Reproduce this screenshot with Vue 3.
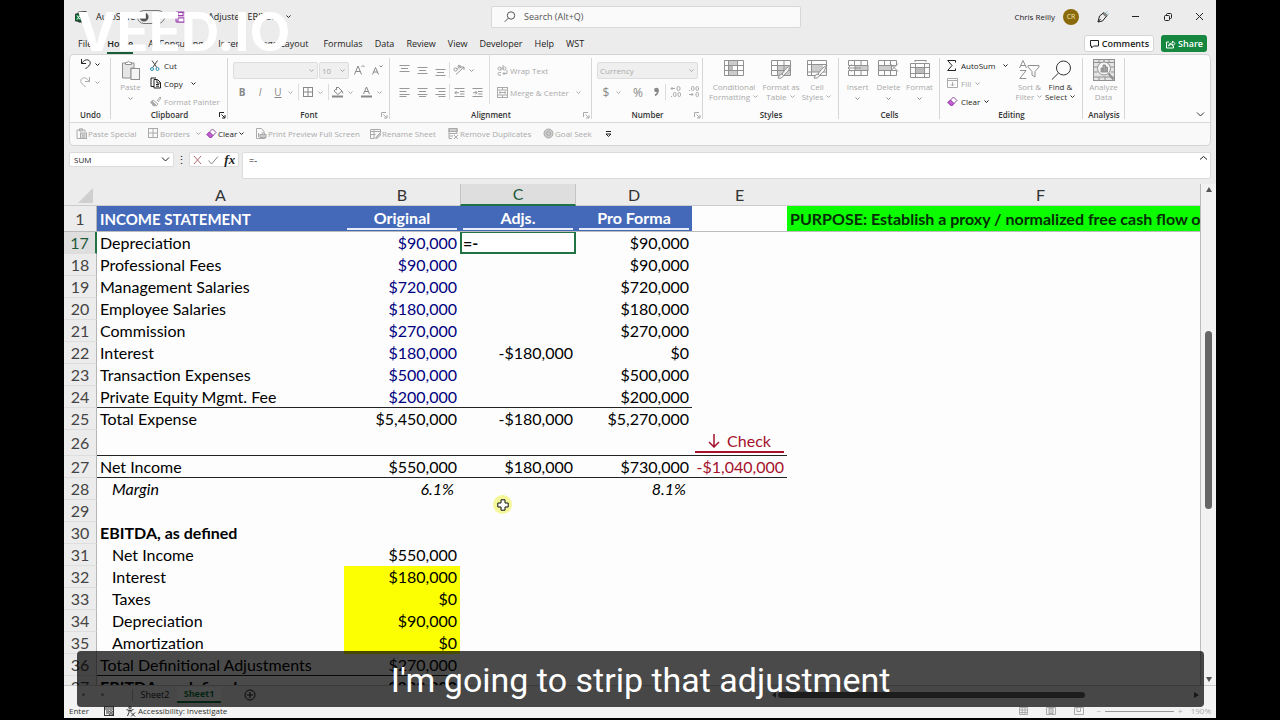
<script setup>
import { h } from 'vue'

const icons = {
  excel: '<rect x="3" y="1" width="9" height="10" rx="1" fill="#21a366"/><path d="M7 1h4a1 1 0 0 1 1 1v4H7z" fill="#33c481"/><rect x="0" y="3" width="7" height="7" rx="1" fill="#107c41"/><path d="M2 4.5l3 4M5 4.5l-3 4" stroke="#fff"/>',
  save: '<path d="M1 1h8l2 2v8H1z" fill="#dcb8e4" stroke="#9b3fb0"/><rect x="3" y="1.5" width="5" height="3" fill="#fff" stroke="#9b3fb0"/><rect x="3" y="7" width="6" height="4" fill="#fff" stroke="#9b3fb0"/>',
  search: '<circle cx="7" cy="4.5" r="3.7" fill="none"/><path d="M4.3 7.2L.7 10.8"/>',
  pen: '<path d="M1 11l1.500-6L7 1.500l3 3L5.500 10zM1 11l2.500-3M6 2.500l3 3"/><path d="M9 1.500l1-1M10.500 3h1" stroke="#2a9bb0"/>',
  minus: '<path d="M2 5.500h7"/>',
  restore: '<rect x="2.500" y="4.500" width="5" height="5" rx="1"/><path d="M4.500 4V3.500q0-1 1-1h3q1 0 1 1v3q0 1-1 1H8"/>',
  close: '<path d="M2 2l7 7M9 2L2 9"/>',
  comment: '<path d="M1.500 1.500h8v5.500h-5l-2 2v-2h-1z"/>',
  share: '<path d="M4 3H1.500v6h7V7M3.500 7q0-3 4-3.200V2L10 4.600 7.500 7V5.300Q5 5.300 3.500 7z"/>',
  caret: '<path d="M1.500 1.500L3.500 3.500 5.500 1.500"/>',
  chev: '<path d="M1 1.500L4.500 5 8 1.500"/>',
  chevup: '<path d="M1 4.500L4.500 1.500 8 4.500"/>',
  undo: '<path d="M1.500 1v4.500H6M1.500 5.500C4 2 7 1 9 2.500s1.500 4.500-1 6l-2.500 2.500"/>',
  redo: '<path d="M9.500 1v4.500H5M9.500 5.500C7 2 4 1 2 2.500S.5 7 3 8.500L5.500 11"/>',
  paste: '<path d="M1.500 3H13v5h-3v10H1.500z" fill="#e6e6e6"/><path d="M4.500 4.500v-2h1.500q1.500-2.500 3 0h1.500v2z" fill="#fff"/><rect x="10" y="8.500" width="8.500" height="11" fill="#f4f4f4"/>',
  cut: '<path d="M2 .5l4.800 7M7.500 .5l-4.800 7" stroke="#444"/><circle cx="2" cy="9" r="1.500" stroke="#288db0"/><circle cx="7.500" cy="9" r="1.500" stroke="#288db0"/>',
  copy: '<path d="M4 9.500H1V1h5M4 2.500h3.500L10.500 5.500V11H4z"/><path d="M7 3v3h3.500M6 7.500h3M6 9.200h3"/>',
  brush: '<path d="M7 5l3-4 1 1-3 4M3 4l5 4-1.500 1.500L2 5.500z"/><path d="M2 5L.5 6l3 4 3-.5z" fill="#aaa"/>',
  launch: '<path d="M.5 5V.5H5M2.500 2.500L6 6M6 3v3H3"/>',
  borders: '<rect x=".5" y=".5" width="9" height="9"/><path d="M5 .5v9M.5 5h9"/>',
  fill: '<path d="M2 5l4-4 4 4-4 3.500zM4.500 1v3M10 5l1 2.500"/><path d="M0 10.500h11" stroke-width="2"/>',
  fontc: '<path d="M2.500 8L5.500 1l3 7M3.500 5.500h4"/><path d="M0 10.500h11" stroke-width="2"/>',
  grow: '<path d="M.5 10.500L4 2l3.500 8.500M1.800 7.500h4.500M7.500 3L9 1.500 10.500 3"/>',
  shrink: '<path d="M.5 10.500L3.500 3.500l3 7M1.500 8h4M7.500 1.500L9 3l1.500-1.500"/>',
  top: '<path d="M.5 1.500h10M2 4.500h7M.5 7.500h10"/>',
  mid: '<path d="M.5 3.500h10M2 6.500h7M.5 9.500h10"/>',
  bot: '<path d="M.5 5.500h10M2 8.500h7M.5 11.500h10"/>',
  left: '<path d="M.5 1.500h10M.5 4.500h7M.5 7.500h10M.5 9.500h7"/>',
  center: '<path d="M.5 1.500h10M2 4.500h7M.5 7.500h10M2 9.500h7"/>',
  right: '<path d="M.5 1.500h10M3.500 4.500h7M.5 7.500h10M3.500 9.500h7"/>',
  orient: '<path d="M3 10.500L11 3M11 6V3H8"/><circle cx="2.500" cy="5.500" r="1.600"/><path d="M3.500 4l1.500 1.500M5 1l3 3"/><circle cx="6.500" cy="2.800" r="1.400"/>',
  outdent: '<path d="M.5 1.500h10M6 4.500h4.500M6 7h4.500M.5 9.500h10M5 5.700H1M2.500 4L1 5.700l1.500 1.700"/>',
  indent: '<path d="M.5 1.500h10M6 4.500h4.500M6 7h4.500M.5 9.500h10M1 5.700h4M3.500 4L5 5.700 3.500 7.400"/>',
  wrap: '<circle cx="2.500" cy="3.500" r="1.500"/><path d="M4 2v3.500M6 0v5"/><circle cx="7.500" cy="3.500" r="1.500"/><path d="M4 7.500q-3-1-3 1.300t3 1.200M10 5v3.500H6M7.500 7L6 8.500 7.500 10"/>',
  merge: '<rect x=".5" y=".5" width="10" height="10"/><path d="M.5 3h10M.5 8h10M5.500 .5V3M5.500 8v2.500M2 5.500h7M3.500 4.200L2 5.500l1.500 1.300M7.500 4.200L9 5.500 7.500 6.800"/>',
  comma: '<circle cx="3.500" cy="3" r="2.300" fill="currentColor" stroke="none"/><path d="M5 3q.3 3.500-3 5.500" stroke-width="1.500"/>',
  dec1: '<path d="M1 2.500h4M2.500 1L1 2.500 2.500 4M1.500 10v1"/><rect x="7" y=".5" width="3" height="4" rx="1.500"/><rect x="3.500" y="6.500" width="2.500" height="4" rx="1.200"/><rect x="8" y="6.500" width="2.500" height="4" rx="1.200"/>',
  dec2: '<path d="M1 8.500h4M3.500 7L5 8.500 3.500 10M1.500 4v1"/><rect x="3.500" y=".5" width="2.500" height="4" rx="1.200"/><rect x="8" y=".5" width="2.500" height="4" rx="1.200"/><rect x="8" y="6.500" width="2.500" height="4" rx="1.200"/>',
  cond: '<rect x="4" y="1" width="9" height="5" fill="#ccc" stroke="none"/><rect x="4" y="6" width="5" height="5" fill="#bbb" stroke="none"/><rect x="4" y="11" width="9" height="5" fill="#ccc" stroke="none"/><path d="M.5 .5h19v15H.5zM.5 5.500h19M.5 10.500h19M4.500 .5v15M13.500 .5v15"/>',
  fmtTable: '<rect x="7" y="6" width="12" height="9" fill="#ccc" stroke="none"/><path d="M.5 .5h19v15H.5zM.5 5.500h19M.5 10.500h19M6.500 .5v15M13 .5v15"/><path d="M20 5q-6 3-9 9l1.500 1.500Q18 12 20 5zM11 14q-3 0-4 4 4 1 5.500-2.500z" fill="#f4f4f4"/>',
  cellSt: '<rect x="4" y="4" width="12" height="8" fill="#ccc" stroke="none"/><path d="M.5 .5h19v15H.5zM.5 4.500h19M.5 12h19M4.500 .5v15"/><path d="M20 5q-6 3-9 9l1.500 1.500Q18 12 20 5zM11 14q-3 0-4 4 4 1 5.500-2.500z" fill="#f4f4f4"/>',
  insert: '<path d="M1.500 .5h19v5H1.500zM1.500 10.500h19v5H1.500zM7.500 .5v5M14 .5v5M7.500 10.500v5M14 10.500v5"/><rect x="8" y="5.500" width="13" height="5" fill="#ccc"/><path d="M14 8H1M4.500 4.500L1 8l3.500 3.500"/>',
  del: '<path d="M.5 .5h18v5H.5zM.5 10.500h18v5H.5zM6.500 .5v5M12.500 .5v5M6.500 10.500v5M12.500 10.500v5"/><rect x=".5" y="5.500" width="13" height="5" fill="#ccc"/><path d="M12 3.500l8 8M20 3.500l-8 8"/>',
  format: '<path d="M5 .5h11M5 0v2M16 0v2M.5 3.500h19v14H.5zM.5 7.500h19M.5 13.500h19M5.500 3.500v14M14.500 3.500v14"/><rect x="5.500" y="7.500" width="9" height="6" fill="#bbb"/>',
  sum: '<path d="M8.500 2.500V.5H.7L5 5.500.7 10.500h7.800v-2"/>',
  fillDown: '<path d="M.5 .5h10v9H.5zM.5 2.500h10M5.500 4v4M3.800 6.300L5.500 8l1.700-1.700"/>',
  eraser: '<path d="M1 6.500L6.500 1 10 4.500 4.500 10z" fill="#fff" stroke="#8a4a98"/><path d="M1 6.500L3.500 4 7 7.500 4.500 10z" fill="#c45fd2" stroke="#9a3dac"/>',
  sort: '<path d="M.5 8L4 .5 7.500 8M1.500 5.500h5M1 10.500h6L.8 18.500h6.500" /><path d="M9 5.500h11v1.500l-4 4.500v5.500l-3-2v-3.500L9 7z"/>',
  find: '<circle cx="12.500" cy="8" r="7"/><path d="M7.500 13L.8 19.700"/>',
  analyze: '<rect x=".5" y=".5" width="21" height="21" fill="#e4e4e4"/><path d="M.5 3.500h21M.5 18h21M6 .5v3M11 .5v3M16 .5v3M.5 8h4M.5 13h4M18 8h4M18 13h4M6 18v4M12 18v4"/><circle cx="11" cy="9.500" r="6.500" fill="#f6f6f6"/><path d="M15.500 14.500l5 6" stroke-width="2"/><path d="M8 13V9h2v4zM10 13V6h2.500v7zM12.500 13V8h2v5z" fill="#aaa"/>',
  pasteSp: '<path d="M9 4V2H1v8.500h3M3.500 3V.8h3V3z"/><rect x="4.500" y="5" width="6" height="5.500" fill="#ddd"/><path d="M6 7h3M6 9h3"/>',
  page: '<path d="M5 10.500H.5V.5h5l2.500 3V5"/><rect x="4" y="6.500" width="6" height="3" fill="#ccc"/><path d="M5.500 5h3v1.500M5 9v1.500h4V9M2.500 5v4"/>',
  rename: '<path d="M4 10.500H.5v-9h10v3M.5 3.500h10M.5 6.500h5M4 1.500v9"/><path d="M10.500 4.500l-4 4-1 2 2-.5 4-4z" fill="#ccc"/>',
  remove: '<rect x="1" y=".5" width="8" height="3" fill="#ccc"/><path d="M1 .5v10M9 .5v5M1 5.500h8M1 8h4M6 7l4 4M10 7l-4 4M1 10.500h3"/>',
  goal: '<circle cx="5.500" cy="5.500" r="4.500" fill="#ccc"/><circle cx="5.500" cy="5.500" r="2"/>',
  overflow: '<path d="M1 1.500h5"/><path d="M1 4h5L3.500 6.500z"/>',
  cancel: '<path d="M1 1l7 8M8 1L1 9" stroke="#a86a72"/>',
  check: '<path d="M.5 5.500l3 3.500L10 1.500"/>',
  add: '<circle cx="6" cy="6" r="5"/><path d="M6 3v6M3 6h6"/>',
  record: '<rect x=".5" y="1" width="9" height="8.500"/><path d="M.5 3h9M2 5h3M2 7h2"/><circle cx="7" cy="7" r="2.200" fill="#fff"/><circle cx="7" cy="7" r=".6"/>',
  access: '<circle cx="4" cy="1.800" r="1.200"/><path d="M.5 3.500L3 4.500v2L1.500 10M7.500 3.500L5 4.500M3 4.500h2V6M5 6.500l4 4M9 6.500l-4 4"/>',
  view1: '<path d="M.5 .5h8v7h-8zM.5 3h8M.5 5.500h8M3.200 .5v7M6 .5v7"/>',
  view2: '<path d="M.5 .5h9v7h-9z"/><rect x="3" y="1.500" width="4" height="5" fill="#ccc"/>',
  view3: '<path d="M.5 .5h9v7h-9zM3 .5v4h3.500v-4"/>',
  cross: '<path d="M4 .8h4V4h3.200v4H8v3.200H4V8H.8V4H4z" fill="#fff"/>',
}
const Ico = (p) => h('svg', {
  class: 'ico', width: p.w, height: p.h, viewBox: `0 0 ${p.w} ${p.h}`,
  fill: 'none', stroke: 'currentColor', 'aria-hidden': 'true', innerHTML: icons[p.n],
})
Ico.props = ['n', 'w', 'h']

const tabs = ['File', 'Home', 'Al Consulting', 'Insert', 'Page Layout', 'Formulas', 'Data', 'Review', 'View', 'Developer', 'Help', 'WST']
const columns = ['A', 'B', 'C', 'D', 'E', 'F']
const rows = [
  { n: 17, a: 'Depreciation', b: '$90,000', d: '$90,000', in: true, edit: true },
  { n: 18, a: 'Professional Fees', b: '$90,000', d: '$90,000', in: true },
  { n: 19, a: 'Management Salaries', b: '$720,000', d: '$720,000', in: true },
  { n: 20, a: 'Employee Salaries', b: '$180,000', d: '$180,000', in: true },
  { n: 21, a: 'Commission', b: '$270,000', d: '$270,000', in: true },
  { n: 22, a: 'Interest', b: '$180,000', c: '-$180,000', d: '$0', in: true },
  { n: 23, a: 'Transaction Expenses', b: '$500,000', d: '$500,000', in: true },
  { n: 24, a: 'Private Equity Mgmt. Fee', b: '$200,000', d: '$200,000', in: true, cls: 'line4' },
  { n: 25, a: 'Total Expense', b: '$5,450,000', c: '-$180,000', d: '$5,270,000' },
  { n: 26, e: 'Check', cls: 'tall line5' },
  { n: 27, a: 'Net Income', b: '$550,000', c: '$180,000', d: '$730,000', e: '-$1,040,000', cls: 'line5' },
  { n: 28, a: 'Margin', b: '6.1%', d: '8.1%', cls: 'ital ind' },
  { n: 29 },
  { n: 30, a: 'EBITDA, as defined', cls: 'bold' },
  { n: 31, a: 'Net Income', b: '$550,000', cls: 'ind' },
  { n: 32, a: 'Interest', b: '$180,000', cls: 'ind yel' },
  { n: 33, a: 'Taxes', b: '$0', cls: 'ind yel' },
  { n: 34, a: 'Depreciation', b: '$90,000', cls: 'ind yel' },
  { n: 35, a: 'Amortization', b: '$0', cls: 'ind yel' },
  { n: 36, a: 'Total Definitional Adjustments', b: '$270,000', cls: 'line2' },
  { n: 37, a: 'EBITDA, as defined', b: '$820,000', cls: 'bold' },
]
</script>

<template>
  <div class="stage">
    <div class="excel">
      <header class="title">
        <div class="docbar">
          <Ico n="excel" w="12" h="12" />
          <label class="autosave">AutoSave <input type="checkbox" role="switch"></label>
          <button aria-label="Save"><Ico n="save" w="12" h="12" /></button>
          <button class="doc"><span>Adjusted EBITDA</span><Ico n="caret" w="7" h="5" /></button>
        </div>
        <label class="search"><Ico n="search" w="12" h="12" /><input type="text" placeholder="Search (Alt+Q)" aria-label="Search"></label>
        <div class="account">
          <span class="user">Chris Reilly</span><span class="avatar">CR</span>
          <button aria-label="Pen"><Ico n="pen" w="12" h="12" /></button>
          <button aria-label="Minimize"><Ico n="minus" w="11" h="11" /></button>
          <button aria-label="Restore"><Ico n="restore" w="11" h="11" /></button>
          <button aria-label="Close"><Ico n="close" w="11" h="11" /></button>
        </div>
      </header>

      <nav class="tabs">
        <a v-for="t in tabs" :key="t" href="#" :class="{ on: t === 'Home' }">{{ t }}</a>
        <button class="comments"><Ico n="comment" w="11" h="10" />Comments</button>
        <button class="share"><Ico n="share" w="11" h="10" />Share</button>
      </nav>

      <section class="ribbon">
        <div class="groups">
          <div class="group undo">
            <div class="body col">
              <button class="dark" aria-label="Undo"><Ico n="undo" w="11" h="12" /><Ico n="caret" w="7" h="5" /></button>
              <button aria-label="Redo"><Ico n="redo" w="11" h="12" /><Ico n="caret" w="7" h="5" /></button>
            </div>
            <h2>Undo</h2>
          </div>

          <div class="group clip">
            <div class="body row">
              <button class="big"><Ico n="paste" w="20" h="20" /><span>Paste</span><Ico n="caret" w="7" h="5" /></button>
              <div class="stack">
                <button class="dark"><Ico n="cut" w="11" h="11" />Cut</button>
                <button class="dark"><Ico n="copy" w="11" h="12" />Copy<Ico n="caret" w="7" h="5" class="gapl" /></button>
                <button><Ico n="brush" w="11" h="11" />Format Painter</button>
              </div>
            </div>
            <h2>Clipboard</h2><Ico n="launch" w="7" h="7" class="launch dark" />
          </div>

          <div class="group font">
            <div class="body two">
              <div class="line">
                <button class="combo wide" aria-label="Font name"><span></span><Ico n="caret" w="7" h="5" /></button>
                <button class="combo" aria-label="Font size"><span>10</span><Ico n="caret" w="7" h="5" /></button>
                <button class="t18" aria-label="Grow font"><Ico n="grow" w="11" h="12" /></button>
                <button class="t18" aria-label="Shrink font"><Ico n="shrink" w="11" h="12" /></button>
              </div>
              <div class="line">
                <button class="t18 g"><b>B</b></button>
                <button class="t18 g"><i>I</i></button>
                <button class="t18 g"><u>U</u></button>
                <Ico n="caret" w="7" h="5" /><span class="vs"></span>
                <button class="t18" aria-label="Borders"><Ico n="borders" w="10" h="10" /></button>
                <Ico n="caret" w="7" h="5" /><span class="vs"></span>
                <button class="t18" aria-label="Fill colour"><Ico n="fill" w="12" h="12" /></button>
                <Ico n="caret" w="7" h="5" />
                <button class="t18" aria-label="Font colour"><Ico n="fontc" w="12" h="12" /></button>
                <Ico n="caret" w="7" h="5" />
              </div>
            </div>
            <h2>Font</h2><Ico n="launch" w="7" h="7" class="launch" />
          </div>

          <div class="group align">
            <div class="body row">
              <div class="two aicons">
                <div class="line">
                  <button class="t18" aria-label="Top"><Ico n="top" w="11" h="12" /></button><button class="t18" aria-label="Middle"><Ico n="mid" w="11" h="12" /></button><button class="t18" aria-label="Bottom"><Ico n="bot" w="11" h="12" /></button>
                  <span class="vs"></span><button class="t18" aria-label="Orientation"><Ico n="orient" w="12" h="12" /></button><Ico n="caret" w="7" h="5" />
                </div>
                <div class="line">
                  <button class="t18" aria-label="Left"><Ico n="left" w="11" h="11" /></button><button class="t18" aria-label="Center"><Ico n="center" w="11" h="11" /></button><button class="t18" aria-label="Right"><Ico n="right" w="11" h="11" /></button>
                  <span class="vs"></span><button class="t18" aria-label="Decrease indent"><Ico n="outdent" w="11" h="11" /></button><button class="t18" aria-label="Increase indent"><Ico n="indent" w="11" h="11" /></button>
                </div>
              </div>
              <div class="two awrap">
                <button><Ico n="wrap" w="11" h="11" />Wrap Text</button>
                <button><Ico n="merge" w="11" h="11" />Merge &amp; Center<Ico n="caret" w="7" h="5" class="gapl" /></button>
              </div>
            </div>
            <h2>Alignment</h2><Ico n="launch" w="7" h="7" class="launch" />
          </div>

          <div class="group num">
            <div class="body two">
              <div class="line"><button class="combo full"><span>Currency</span><Ico n="caret" w="7" h="5" /></button></div>
              <div class="line">
                <button class="t18 sym">$</button><Ico n="caret" w="7" h="5" />
                <button class="t18 sym push">%</button><button class="t18 sym" aria-label="Comma style"><Ico n="comma" w="7" h="10" /></button><span class="vs"></span>
                <button class="t18" aria-label="Increase decimal"><Ico n="dec1" w="11" h="12" /></button><button class="t18" aria-label="Decrease decimal"><Ico n="dec2" w="11" h="12" /></button>
              </div>
            </div>
            <h2>Number</h2><Ico n="launch" w="7" h="7" class="launch" />
          </div>

          <div class="group styles">
            <div class="body row">
              <button class="big w56"><Ico n="cond" w="20" h="20" /><span>Conditional<br>Formatting <Ico n="caret" w="7" h="5" /></span></button>
              <button class="big w38"><Ico n="fmtTable" w="21" h="20" /><span>Format as<br>Table <Ico n="caret" w="7" h="5" /></span></button>
              <button class="big w34"><Ico n="cellSt" w="21" h="20" /><span>Cell<br>Styles <Ico n="caret" w="7" h="5" /></span></button>
            </div>
            <h2>Styles</h2>
          </div>

          <div class="group cells">
            <div class="body row">
              <button class="big w30"><Ico n="insert" w="22" h="20" /><span>Insert</span><Ico n="caret" w="7" h="5" /></button>
              <button class="big w30"><Ico n="del" w="21" h="20" /><span>Delete</span><Ico n="caret" w="7" h="5" /></button>
              <button class="big w30"><Ico n="format" w="20" h="20" /><span>Format</span><Ico n="caret" w="7" h="5" /></button>
            </div>
            <h2>Cells</h2>
          </div>

          <div class="group edit">
            <div class="body row">
              <div class="stack">
                <button class="dark"><Ico n="sum" w="11" h="11" />AutoSum<Ico n="caret" w="7" h="5" class="gapl" /></button>
                <button><Ico n="fillDown" w="11" h="11" />Fill<Ico n="caret" w="7" h="5" /></button>
                <button class="dark"><Ico n="eraser" w="11" h="11" />Clear<Ico n="caret" w="7" h="5" /></button>
              </div>
              <button class="big w30"><Ico n="sort" w="21" h="20" /><span>Sort &amp;<br>Filter <Ico n="caret" w="7" h="5" /></span></button>
              <button class="big w30 dark"><Ico n="find" w="20" h="20" /><span>Find &amp;<br>Select <Ico n="caret" w="7" h="5" /></span></button>
            </div>
            <h2>Editing</h2>
          </div>

          <div class="group anal">
            <div class="body row"><button class="big"><Ico n="analyze" w="22" h="22" /><span>Analyze<br>Data</span></button></div>
            <h2>Analysis</h2>
          </div>
          <button class="collapse" aria-label="Collapse ribbon"><Ico n="chev" w="9" h="7" /></button>
        </div>

        <div class="quick">
          <button class="q1"><Ico n="pasteSp" w="11" h="11" />Paste Special</button>
          <button class="q2"><Ico n="borders" w="11" h="11" />Borders<Ico n="caret" w="7" h="5" class="gapl" /></button>
          <button class="q3 dark"><Ico n="eraser" w="11" h="11" />Clear<Ico n="caret" w="7" h="5" /></button>
          <button class="q4"><Ico n="page" w="11" h="11" />Print Preview Full Screen</button>
          <button class="q5"><Ico n="rename" w="11" h="11" />Rename Sheet</button>
          <button class="q6"><Ico n="remove" w="11" h="11" />Remove Duplicates</button>
          <button class="q7"><Ico n="goal" w="11" h="11" />Goal Seek</button>
          <button class="dark" aria-label="More"><Ico n="overflow" w="7" h="8" /></button>
        </div>
      </section>

      <section class="formula">
        <button class="namebox"><span>SUM</span><Ico n="chev" w="9" h="7" /></button>
        <span class="dots">⋮</span>
        <div class="fx"><button aria-label="Cancel"><Ico n="cancel" w="9" h="10" /></button><button aria-label="Enter"><Ico n="check" w="11" h="10" /></button><button><i>fx</i></button></div>
        <div class="fbox"><input type="text" value="=-" aria-label="Formula"><Ico n="chevup" w="9" h="7" /></div>
      </section>

      <main class="work">
        <div class="sheet">
          <table>
            <colgroup><col class="cn"><col class="ca"><col class="cb"><col class="cb"><col class="cb"><col class="ce"><col class="cf"></colgroup>
            <thead>
              <tr class="letters"><th class="corner"><i></i></th><th v-for="c in columns" :key="c" :class="{ sel: c === 'C' }">{{ c }}</th></tr>
              <tr class="first"><th class="rn">1</th><th class="blue l">INCOME STATEMENT</th><th class="blue"><span>Original</span></th><th class="blue"><span>Adjs.</span></th><th class="blue"><span>Pro Forma</span></th><td></td><th class="green">PURPOSE: Establish a proxy / normalized free cash flow of</th></tr>
            </thead>
            <tbody>
              <tr v-for="r in rows" :key="r.n" :class="r.cls">
                <th class="rn" :class="{ sel: r.edit }">{{ r.n }}</th>
                <td class="a">{{ r.a }}</td>
                <td class="n b" :class="{ input: r.in }">{{ r.b }}</td>
                <td v-if="r.edit" class="editing"><input type="text" value="=-" aria-label="Cell C17"></td>
                <td v-else class="n">{{ r.c }}</td>
                <td class="n">{{ r.d }}</td>
                <td class="n red"><span v-if="r.n === 26" class="check"><svg width="12" height="14" viewBox="0 0 12 14" fill="none" stroke="currentColor" stroke-width="1.500"><path d="M6 0v13M1 8l5 5 5-5" /></svg>Check</span><template v-else>{{ r.e }}</template></td>
                <td></td>
              </tr>
            </tbody>
          </table>
          <span class="pointer"><Ico n="cross" w="12" h="12" /></span>
        </div>
        <div class="vscroll"><i class="up"></i><i class="vthumb"></i><i class="down"></i></div>
      </main>

      <footer>
        <div class="sheets">
          <span class="nav"><i></i><i></i></span>
          <button class="s2">Sheet2</button><button class="s1">Sheet1</button>
          <button class="plus" aria-label="New sheet"><Ico n="add" w="12" h="12" /></button>
          <span class="hscroll"><i class="al"></i><i class="hthumb"></i><i class="ar"></i></span>
        </div>
        <div class="status">
          <span>Enter</span><Ico n="record" w="11" h="10" /><Ico n="access" w="10" h="11" /><span class="acc">Accessibility: Investigate</span>
          <span class="zoom"><Ico n="view1" w="9" h="8" /><Ico n="view2" w="10" h="8" /><Ico n="view3" w="10" h="8" /><span class="zs">−<i></i>+</span><span>190%</span></span>
        </div>
      </footer>

      <div class="caption">I'm going to strip that adjustment</div>
      <div class="mark">VEED.IO</div>
    </div>
  </div>
</template>

<style>
body { background: #000; }
</style>

<style scoped>
* { box-sizing: border-box; }
.stage { height: 100vh; min-height: 480px; padding: 0 5% 2px; background: #000; font-family: "Open Sans", "Noto Sans", sans-serif; font-size: 8px; color: #222; }
.excel { position: relative; height: 100%; display: flex; flex-direction: column; background: #ececec; overflow: hidden; }
button, input { font: inherit; color: inherit; background: none; border: 0; padding: 0; margin: 0; }
button { display: inline-flex; align-items: center; white-space: nowrap; }
.ico { flex: none; display: block; }
.dark { color: #222; }

.title { display: flex; align-items: center; height: 33px; font-size: 9px; padding: 0 11px; flex: none; }
.docbar { display: flex; align-items: center; width: 416px; gap: 9px; }
.autosave { display: flex; align-items: center; gap: 2px; width: 69px; justify-content: space-between; margin-right: 1px; }
.autosave input { appearance: none; width: 30px; height: 14px; border: 1px solid #777; border-radius: 7px; background: radial-gradient(circle at 6px 6px, #555 4px, transparent 5px); }
.doc { width: 84px; margin-left: 12px; justify-content: space-between; overflow: hidden; }
.search { display: flex; align-items: center; width: 310px; height: 22px; padding: 0 12px; gap: 8px; background: #fafafa; border: 1px solid #d8d8d8; border-radius: 2px; color: #555; }
.search input { width: 100%; }
.search input::placeholder { color: #555; opacity: 1; }
.account { display: flex; align-items: center; margin-left: auto; gap: 21px; }
.user { font-size: 8px; }
.avatar { width: 16px; height: 16px; border-radius: 8px; background: #8a6a0a; color: #f3e6b8; font-size: 7px; line-height: 16px; text-align: center; margin: 0 -3px 0 -13px; }

.tabs { display: flex; align-items: center; height: 21px; padding: 0 9px 0 14px; gap: 12px; font-size: 9px; flex: none; }
.tabs a { color: #222; text-decoration: none; line-height: 16px; border-bottom: 2px solid transparent; margin-top: 2px; white-space: nowrap; }
.tabs a:nth-child(-n+5) { margin-right: 3px; }
.tabs a.on { border-color: #185c37; font-weight: 600; }
.tabs button { height: 17px; border-radius: 3px; padding: 0 4px; gap: 2px; font-weight: 600; }
.comments { margin-left: auto; background: #fff; border: 1px solid #d5d5d5; }
.share { margin-left: -5px; background: #15873f; color: #fff; }

.ribbon { margin: 0 5px; border: 1px solid #d4d4d4; border-radius: 5px; background: #fcfcfc; flex: none; color: #aaa; }
.groups { display: flex; height: 67px; }
.group { position: relative; display: flex; flex-direction: column; flex: none; }
.group::after { content: ""; position: absolute; right: 0; top: 3px; bottom: 3px; width: 1px; background: #d6d6d6; }
.group h2 { margin: 0; font-size: 8px; line-height: 12px; font-weight: 600; color: #333; text-align: center; }
.body { height: 54px; }
.row { display: flex; align-items: flex-start; }
.col, .two, .stack { display: flex; flex-direction: column; }
.launch { position: absolute; right: 2px; bottom: 3px; }
.undo { width: 41px; } .clip { width: 117px; } .font { width: 162px; } .align { width: 202px; } .num { width: 111px; }
.styles { width: 136px; } .cells { width: 101px; } .edit { width: 143px; } .anal { width: 42px; }
.col { padding: 3px 0 0 10px; gap: 6px; }
.col button { gap: 3px; }
.big { flex-direction: column; align-items: center; padding-top: 5px; line-height: 10px; color: #aaa; }
.big > .ico { color: #909090; }
.big > span { margin-top: 2px; text-align: center; }
.big > .ico + span + .ico { margin-top: 4px; }
.big span .ico { display: inline-block; vertical-align: 1px; }
.big.dark, .big.dark > .ico { color: #333; }
.clip .big { width: 39px; }
.stack { padding-top: 1px; }
.stack button { height: 18px; gap: 3px; }
.gapl { margin-left: 4px; }
.two { padding-top: 5px; gap: 2px; }
.line { display: flex; align-items: center; height: 20px; }
.font .two, .font .body { padding-left: 5px; }
.combo { height: 17px; background: #efefef; border: 1px solid #ddd; border-radius: 2px; width: 30px; justify-content: space-between; padding: 0 2px; margin-right: 1px; }
.combo.wide { width: 85px; }
.combo.full { width: 101px; }
.t18 { width: 18px; height: 18px; justify-content: center; }
.g { font-size: 10px; }
.line > .ico { margin-right: 4px; }
.font .line .t18 { color: #888; }
.vs { width: 1px; height: 16px; background: #ddd; }
.aicons { width: 100px; padding-left: 5px; border-right: 1px solid #ddd; height: 49px; color: #999; }
.awrap { padding-left: 7px; }
.awrap button { height: 20px; gap: 2px; }
.num .body { padding-left: 5px; }
.sym { font-size: 12px; color: #888; }
.push { margin-left: 3px; }
.styles .body { padding-left: 3px; }
.w56 { width: 56px; } .w38 { width: 38px; } .w34 { width: 34px; } .w30 { width: 31px; }
.cells .body { padding-left: 3px; }
.edit .body { padding-left: 7px; }
.edit .stack { width: 67px; }
.anal .big { width: 41px; padding-top: 4px; }
.anal .big > span { margin-top: 1px; }
.collapse { margin: auto 5px 4px auto; color: #333; }

.quick { display: flex; align-items: center; height: 23px; padding: 0 0 1px 6px; border-top: 1px solid #d8d8d8; background: #f9f9f9; border-radius: 0 0 5px 5px; }
.quick button { gap: 1px; }
.q1 { width: 72px; } .q2 { width: 58px; } .q3 { width: 50px; } .q4 { width: 114px; } .q5 { width: 78px; } .q6 { width: 95px; } .q7 { width: 62px; }

.formula { display: flex; align-items: flex-start; height: 27px; margin: 6px 5px 0; flex: none; }
.formula > div, .namebox { background: #fff; border: 1px solid #dcdcdc; border-radius: 2px; }
.namebox { width: 105px; height: 15px; padding: 0 3px 0 4px; justify-content: space-between; }
.dots { width: 15px; text-align: center; font-size: 11px; line-height: 15px; }
.fx { display: flex; width: 50px; height: 15px; justify-content: space-around; margin-right: 3px; color: #888; }
.fx i { font-family: "Liberation Serif", serif; font-size: 13px; line-height: 13px; font-weight: 700; color: #222; }
.fbox { display: flex; align-items: flex-start; flex: 1; height: 27px; padding: 2px 2px 0 6px; }
.fbox input { flex: 1; height: 10px; font-size: 9px; }

.work { display: flex; flex: 1; min-height: 0; padding-top: 5px; }
.sheet { position: relative; flex: 1; min-width: 0; overflow: hidden; background: #fdfdfd; border-right: 1px solid #bbb; }
table { table-layout: fixed; width: 1230px; border-collapse: separate; border-spacing: 0; font-family: Lato, sans-serif; font-size: 16px; line-height: 20px; color: #000; }
.cn { width: 33px; } .ca { width: 247px; } .cb { width: 116px; } .ce { width: 95px; }
td, th { padding: 0; height: 22px; white-space: nowrap; font-weight: 400; }
.letters th { height: 22px; background: #ececec; color: #333; border-bottom: 1px solid #ccc; }
.letters th.sel { background: #dedede; color: #1c5a3a; border-bottom: 2px solid #217346; border-left: 1px solid #c4c4c4; border-right: 1px solid #c4c4c4; }
.corner i { display: block; margin: 2px 4px 0 auto; width: 15px; height: 15px; background: #cfcfcf; clip-path: polygon(100% 0, 100% 100%, 0 100%); }
.rn { background: #ececec; color: #444; border-right: 1px solid #b5b5b5; border-bottom: 1px solid #dedede; }
.rn.sel { background: #dedede; color: #1c5a3a; border-right: 2px solid #217346; }
.first th, .first td { height: 26px; border-bottom: 1px solid #bbb; }
.first .blue { background: #4469b9; color: #fff; font-weight: 700; }
.first .l { text-align: left; padding-left: 3px; font-size: 15px; }
.blue span { display: block; margin: 0 3px; border-bottom: 2px solid #e6ecf8; }
.first .green { background: #0cfd02; font-weight: 700; text-align: left; padding-left: 3px; color: #052d05; }
.a { padding-left: 3px; }
.ind .a { padding-left: 15px; }
.n { text-align: right; padding-right: 3px; }
.input { color: #000080; }
.ital td { font-style: italic; }
.ital .n { padding-right: 6px; }
.bold td { font-weight: 700; }
.yel .b { background: #fbff02; }
.tall td, .tall th { height: 26px; }
.line4 td:nth-child(-n+5), .line5 td:nth-child(-n+6), .line2 td:nth-child(-n+3) { border-bottom: 1px solid #222; }
.red { color: #a5112b; }
.check { display: flex; justify-content: center; align-items: center; gap: 7px; border-bottom: 2px solid #a5112b; margin: 0 0 2px 3px; line-height: 20px; }
.editing { border: 2px solid #217346; border-top-width: 1px; background: #fff; }
.editing input { display: block; width: 100%; height: 18px; padding-left: 1px; font-weight: 700; }
.pointer { position: absolute; left: 429px; top: 311px; width: 19px; height: 19px; border-radius: 10px; background: #f4f79a; display: flex; align-items: center; justify-content: center; color: #111; }
.vscroll { display: flex; flex-direction: column; align-items: center; width: 15px; background: #f2f2f2; padding: 3px 0; }
.up { border: 3px solid transparent; border-top: 0; border-bottom: 5px solid #555; }
.down { margin-top: auto; border: 3px solid transparent; border-bottom: 0; border-top: 5px solid #555; }
.vthumb { width: 7px; height: 36%; border-radius: 4px; background: #666; margin-top: 139px; }

footer { flex: none; background: #f3f3f3; }
.sheets { display: flex; align-items: center; height: 21px; border-top: 1px solid #ccc; font-size: 9px; padding: 0 17px 3px 0; }
.nav { display: flex; gap: 16px; width: 69px; padding-left: 18px; height: 12px; align-items: center; border-right: 1px solid #bbb; }
.nav i { width: 3px; height: 3px; background: #999; border-radius: 2px; }
.sheets button { justify-content: center; height: 16px; }
.s2 { width: 44px; }
.s1 { width: 44px; background: #fff; color: #107c41; font-weight: 700; border-bottom: 2px solid #107c41; }
.sheets .plus { margin-left: 23px; }
.hscroll { display: flex; align-items: center; margin-left: auto; width: 38%; gap: 2px; padding-left: 4px; }
.hthumb { height: 6px; width: 307px; border-radius: 3px; background: #666; }
.al { border: 3px solid transparent; border-left: 0; border-right: 4px solid #555; }
.ar { margin-left: auto; border: 3px solid transparent; border-right: 0; border-left: 5px solid #555; }
.status { display: flex; align-items: center; height: 12px; padding: 0 5px 2px; font-size: 8px; line-height: 10px; color: #333; }
.status > .ico { margin-left: 15px; }
.status > .ico + .ico { margin-left: 11px; }
.acc { margin-left: 2px; }
.zoom { display: flex; align-items: center; gap: 18px; margin-left: auto; color: #aaa; }
.zs { display: flex; align-items: center; gap: 4px; margin: 0 -10px 0 -5px; }
.zs i { width: 69px; height: 1px; background: #999; }

.caption { position: absolute; left: 13px; right: 12px; bottom: 11px; height: 56px; border-radius: 4px; background: rgba(0, 0, 0, .71); color: #fff; font-family: Roboto, sans-serif; font-size: 34px; line-height: 58px; text-align: center; }
.mark { position: absolute; left: 13px; top: 2px; font-family: Inter, sans-serif; font-weight: 700; font-size: 53px; line-height: 60px; color: #fff; pointer-events: none; }
</style>
